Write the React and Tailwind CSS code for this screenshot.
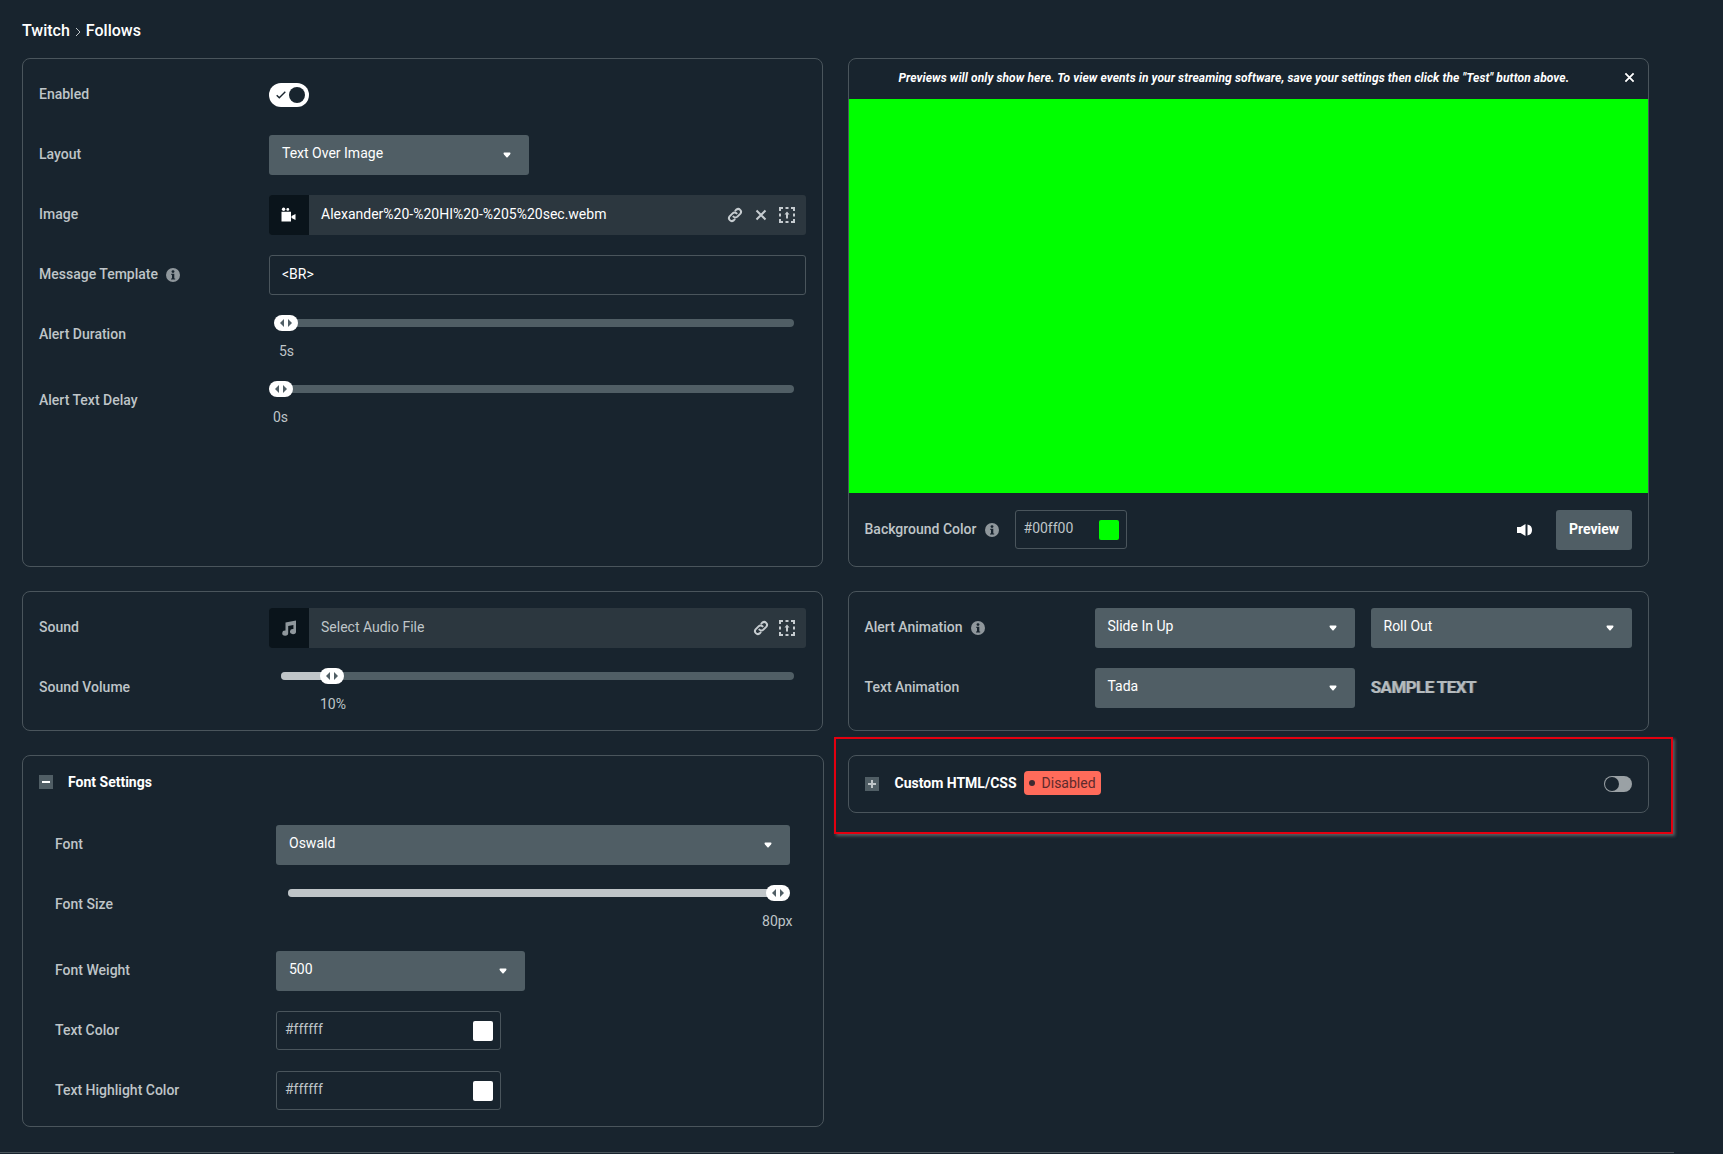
const font = { fontFamily: 'Roboto, sans-serif' };

const Label = ({ children, info }) => (
    <div className="flex items-center h-10 pb-[2px] gap-2 text-sm font-medium text-[#bfc5c8]">
        <span>{children}</span>
        {info && <InfoIcon />}
    </div>
);

const InfoIcon = () => (
    <svg width="14" height="14" viewBox="0 0 14 14" className="shrink-0 mt-[2px]">
        <circle cx="7" cy="7" r="7" fill="#8f979c" />
        <circle cx="7" cy="3.6" r="1.4" fill="#18242e" />
        <path d="M5.3 5.8h3v4.6h.9v1.2H5v-1.2h1V7h-.7z" fill="#18242e" />
    </svg>
);

const Caret = () => (
    <svg width="8" height="6" viewBox="0 0 8 6" className="shrink-0">
        <path d="M0.5 1.2Q0.5 0.5 1.2 0.5H6.8Q7.5 0.5 7.5 1.2Q7.5 1.8 7 2.4L4.6 5.2Q4 5.8 3.4 5.2L1 2.4Q0.5 1.8 0.5 1.2Z" fill="#fff" />
    </svg>
);

const Select = ({ value, className }) => (
    <div className={`flex items-center justify-between h-10 pl-[13px] pr-[18px] rounded-[3px] bg-[#505e65] text-sm text-white ${className}`}>
        <span className="-mt-[5px]">{value}</span>
        <Caret />
    </div>
);

const LinkIcon = () => (
    <svg width="16" height="16" viewBox="0 0 16 16" fill="none" stroke="#c6ccd0" strokeWidth="2" strokeLinecap="round">
        <path d="M6.4 9.6a2.8 2.8 0 0 0 4 0l3-3a2.85 2.85 0 0 0-4-4l-1 1" />
        <path d="M9.6 6.4a2.8 2.8 0 0 0-4 0l-3 3a2.85 2.85 0 0 0 4 4l1-1" />
    </svg>
);

const CloseIcon = ({ color = '#c6ccd0', size = 12 }) => (
    <svg width={size} height={size} viewBox="0 0 12 12" fill="none" stroke={color} strokeWidth="2">
        <path d="M1.5 1.5l9 9M10.5 1.5l-9 9" />
    </svg>
);

const LibraryIcon = () => (
    <svg width="16" height="16" viewBox="0 0 16 16" fill="#c6ccd0">
        <path d="M0 0h4v2H2v2H0zM12 0h4v4h-2V2h-2zM0 12h2v2h2v2H0zM14 12h2v4h-4v-2h2z" />
        <path d="M6.500 0h3v2h-3zM6.500 14h3v2h-3zM0 6.500h2v3H0zM14 6.500h2v3h-2z" />
        <path d="M8 4.500L10.500 7.600H9V11.500H7V7.600H5.500z" />
    </svg>
);

const VideoIcon = () => (
    <svg width="16" height="16" viewBox="0 0 16 16" fill="#fff">
        <circle cx="2.600" cy="2.200" r="1.700" />
        <circle cx="6.800" cy="2.400" r="1.400" />
        <path d="M0.500 4.800h9.500v9.700H0.500z" />
        <path d="M10.500 9l4-2v6l-4-2z" />
    </svg>
);

const MusicIcon = () => (
    <svg width="16" height="16" viewBox="0 0 16 16" fill="#8f979c">
        <path d="M4.500 2.500L15 0.500v11a3 2.600 0 1 1-2.600-2.500V5L7.200 6v7a3 2.600 0 1 1-2.700-2.500z" />
    </svg>
);

const SpeakerIcon = () => (
    <svg width="16" height="14" viewBox="0 0 16 14" fill="#fff">
        <path d="M0 4h3.500L8.500 1v12L3.500 10H0z" />
        <path d="M10.500 1.500a5.600 5.600 0 0 1 0 11z" />
    </svg>
);

const MediaField = ({ icon, value, muted, clearable }) => (
    <div className="flex h-10 rounded-[3px] bg-[#2c373f] overflow-hidden">
        <div className="flex items-center justify-center w-10 bg-[#0a141b]">{icon}</div>
        <div className={`flex-1 pl-3 pb-[2px] flex items-center text-sm ${muted ? 'text-[#bfc5c8]' : 'text-white'}`}>{value}</div>
        <div className="flex items-center gap-[10px] pr-[11px]">
            <LinkIcon />
            {clearable && <div className="flex items-center justify-center w-4"><CloseIcon /></div>}
            <LibraryIcon />
        </div>
    </div>
);

const Thumb = ({ className }) => (
    <div className={`absolute -top-1 flex items-center justify-center gap-1 w-6 h-4 rounded-full bg-white ${className}`}>
        <span className="w-0 h-0 border-y-[4px] border-y-transparent border-r-[4.5px] border-r-[#505e65]"></span>
        <span className="w-0 h-0 border-y-[4px] border-y-transparent border-l-[4.5px] border-l-[#505e65]"></span>
    </div>
);

const Slider = ({ thumbClass, fillClass, value, valueClass }) => (
    <div className="h-[46px] pt-1">
        <div className="mx-3 h-2 rounded-full bg-[#505e65] relative">
            {fillClass && <div className={`h-2 rounded-full bg-[#bfc5c8] ${fillClass}`}></div>}
            <Thumb className={thumbClass} />
        </div>
        <div className={`text-sm text-[#bfc5c8] mt-[14px] ${valueClass}`}>{value}</div>
    </div>
);

const ColorField = ({ value, swatch, className }) => (
    <div className={`flex items-center justify-between h-[39px] pl-2 pr-[7px] rounded-[3px] border border-[#4a555c] text-sm text-[#bfc5c8] ${className}`}>
        <span className="-mt-[3px]">{value}</span>
        <span className={`w-5 h-5 rounded-[2px] ${swatch}`}></span>
    </div>
);

const Row = ({ label, info, children, labelClass = 'w-[230px]' }) => (
    <div className="flex">
        <div className={`shrink-0 ${labelClass}`}><Label info={info}>{label}</Label></div>
        <div className="flex-1 min-w-0">{children}</div>
    </div>
);

const Panel = ({ children, className = '' }) => (
    <section className={`rounded-lg border border-[#4a555c] ${className}`}>{children}</section>
);

const App = () => {
    return (
        <div style={font} className="relative h-[1154px] overflow-hidden bg-[#18242e] pl-[22px]">
            <div className="flex items-center h-[58px] pt-[3px] text-base font-medium text-white">
                Twitch
                <svg width="6" height="10" viewBox="0 0 6 10" fill="none" stroke="#bfc5c8" className="mx-[5px] mt-[2px]">
                    <path d="M1 1l4 4-4 4" />
                </svg>
                Follows
            </div>
            <div className="grid grid-cols-[800.5px_801.5px] gap-x-[25px] gap-y-6">
                <Panel className="p-4 flex flex-col gap-5">
                    <Row label="Enabled">
                        <div className="flex items-center h-10">
                            <div className="relative w-10 h-6 rounded-full bg-white">
                                <svg width="10" height="8" viewBox="0 0 10 8" fill="none" stroke="#18242e" strokeWidth="1.4" className="absolute left-[7px] top-2">
                                    <path d="M0.700 4.200l2.600 2.600L9.300 0.800" />
                                </svg>
                                <div className="absolute right-1 top-1 w-4 h-4 rounded-full bg-[#18242e]"></div>
                            </div>
                        </div>
                    </Row>
                    <Row label="Layout"><Select value="Text Over Image" className="w-[260px]" /></Row>
                    <Row label="Image">
                        <MediaField icon={<VideoIcon />} value="Alexander%20-%20HI%20-%205%20sec.webm" clearable />
                    </Row>
                    <Row label="Message Template" info>
                        <div className="flex items-center h-10 pl-3 pb-[2px] rounded-[3px] border border-[#4a555c] text-sm text-white">{'<BR>'}</div>
                    </Row>
                    <Row label="Alert Duration">
                        <Slider thumbClass="left-[-7px]" value="5s" valueClass="pl-[10px]" />
                    </Row>
                    <Row label="Alert Text Delay">
                        <Slider thumbClass="left-[-12px]" value="0s" valueClass="pl-1" />
                    </Row>
                </Panel>

                <Panel className="flex flex-col h-[509px] overflow-hidden">
                    <div className="relative flex items-center justify-center h-10 pr-[29px] pb-[2px] text-xs font-bold italic tracking-[0.09px] text-white">
                        Previews will only show here. To view events in your streaming software, save your settings then click the "Test" button above.
                        <div className="absolute right-[13px] top-[13px]"><CloseIcon color="#fff" size={11} /></div>
                    </div>
                    <div className="h-[394px] bg-[#00ff00]"></div>
                    <div className="flex items-center flex-1 px-4">
                        <Label info>Background Color</Label>
                        <ColorField value="#00ff00" swatch="bg-[#00ff00]" className="ml-[16px] w-[112px]" />
                        <div className="ml-auto mr-[23px] flex"><SpeakerIcon /></div>
                        <div className="flex items-center justify-center w-[76px] h-10 pb-[2px] rounded-[3px] bg-[#505e65] text-sm font-bold text-white">Preview</div>
                    </div>
                </Panel>

                <Panel className="p-4 flex flex-col gap-5">
                    <Row label="Sound">
                        <MediaField icon={<MusicIcon />} value="Select Audio File" muted />
                    </Row>
                    <Row label="Sound Volume">
                        <Slider thumbClass="left-[39px]" fillClass="w-[51px]" value="10%" valueClass="pl-[51px]" />
                    </Row>
                </Panel>

                <Panel className="p-4 flex flex-col gap-5">
                    <Row label="Alert Animation" info>
                        <div className="flex gap-4">
                            <Select value="Slide In Up" className="w-[260px]" />
                            <Select value="Roll Out" className="flex-1" />
                        </div>
                    </Row>
                    <Row label="Text Animation">
                        <div className="flex gap-4 items-center">
                            <Select value="Tada" className="w-[260px]" />
                            <span className="text-[17px] font-bold tracking-[-0.6px] text-[#b4babd] [text-shadow:1px_0_0_#6f787d]">SAMPLE TEXT</span>
                        </div>
                    </Row>
                </Panel>

                <Panel className="px-4 pt-4 pb-[15px] -mr-px">
                    <div className="flex items-center gap-[15px] h-5 mb-[33px] text-sm font-bold text-white">
                        <div className="flex items-center justify-center w-[14px] h-[14px] bg-[#505e65]">
                            <div className="w-2 h-[2px] bg-white"></div>
                        </div>
                        Font Settings
                    </div>
                    <div className="flex flex-col gap-5 pl-4 pr-[17px]">
                        <Row label="Font" labelClass="w-[221px]"><Select value="Oswald" /></Row>
                        <Row label="Font Size" labelClass="w-[221px]">
                            <Slider thumbClass="right-[-12px]" fillClass="w-full" value="80px" valueClass="text-right -mr-[3px]" />
                        </Row>
                        <Row label="Font Weight" labelClass="w-[221px]"><Select value="500" className="w-[249px]" /></Row>
                        <Row label="Text Color" labelClass="w-[221px]">
                            <ColorField value="#ffffff" swatch="bg-white" className="w-[225px]" />
                        </Row>
                        <Row label="Text Highlight Color" labelClass="w-[221px]">
                            <ColorField value="#ffffff" swatch="bg-white" className="w-[225px]" />
                        </Row>
                    </div>
                </Panel>

                <Panel className="self-start flex items-center h-[58px] px-4">
                    <div className="flex items-center justify-center w-[14px] h-[14px] bg-[#505e65]">
                        <div className="relative w-2 h-[2px] bg-[#bfc5c8]">
                            <div className="absolute left-[3px] -top-[3px] w-[2px] h-2 bg-[#bfc5c8]"></div>
                        </div>
                    </div>
                    <span className="ml-4 pb-[2px] text-sm font-bold text-white">Custom HTML/CSS</span>
                    <span className="flex items-center gap-[7px] ml-[7px] mb-[2px] h-6 pl-[5px] pr-[5px] rounded-[4px] bg-[#ff6b5a] text-sm text-[#5e2a2c]">
                        <span className="w-[6px] h-[6px] rounded-full bg-[#3d2a30]"></span>
                        Disabled
                    </span>
                    <div className="relative ml-auto w-7 h-4 rounded-full bg-[#9aa1a5]">
                        <div className="absolute left-px top-px w-[14px] h-[14px] rounded-full bg-[#18242e]"></div>
                    </div>
                </Panel>
            </div>
            <div className="absolute left-0 top-[1152px] w-[1674px] h-px bg-[#4a555c]"></div>
            <div className="absolute left-[834px] top-[737px] w-[839px] h-[97px] border-2 border-[#e3000f] shadow-[2px_2px_3px_rgba(120,120,120,0.7)]"></div>
        </div>
    );
};

export default App;
